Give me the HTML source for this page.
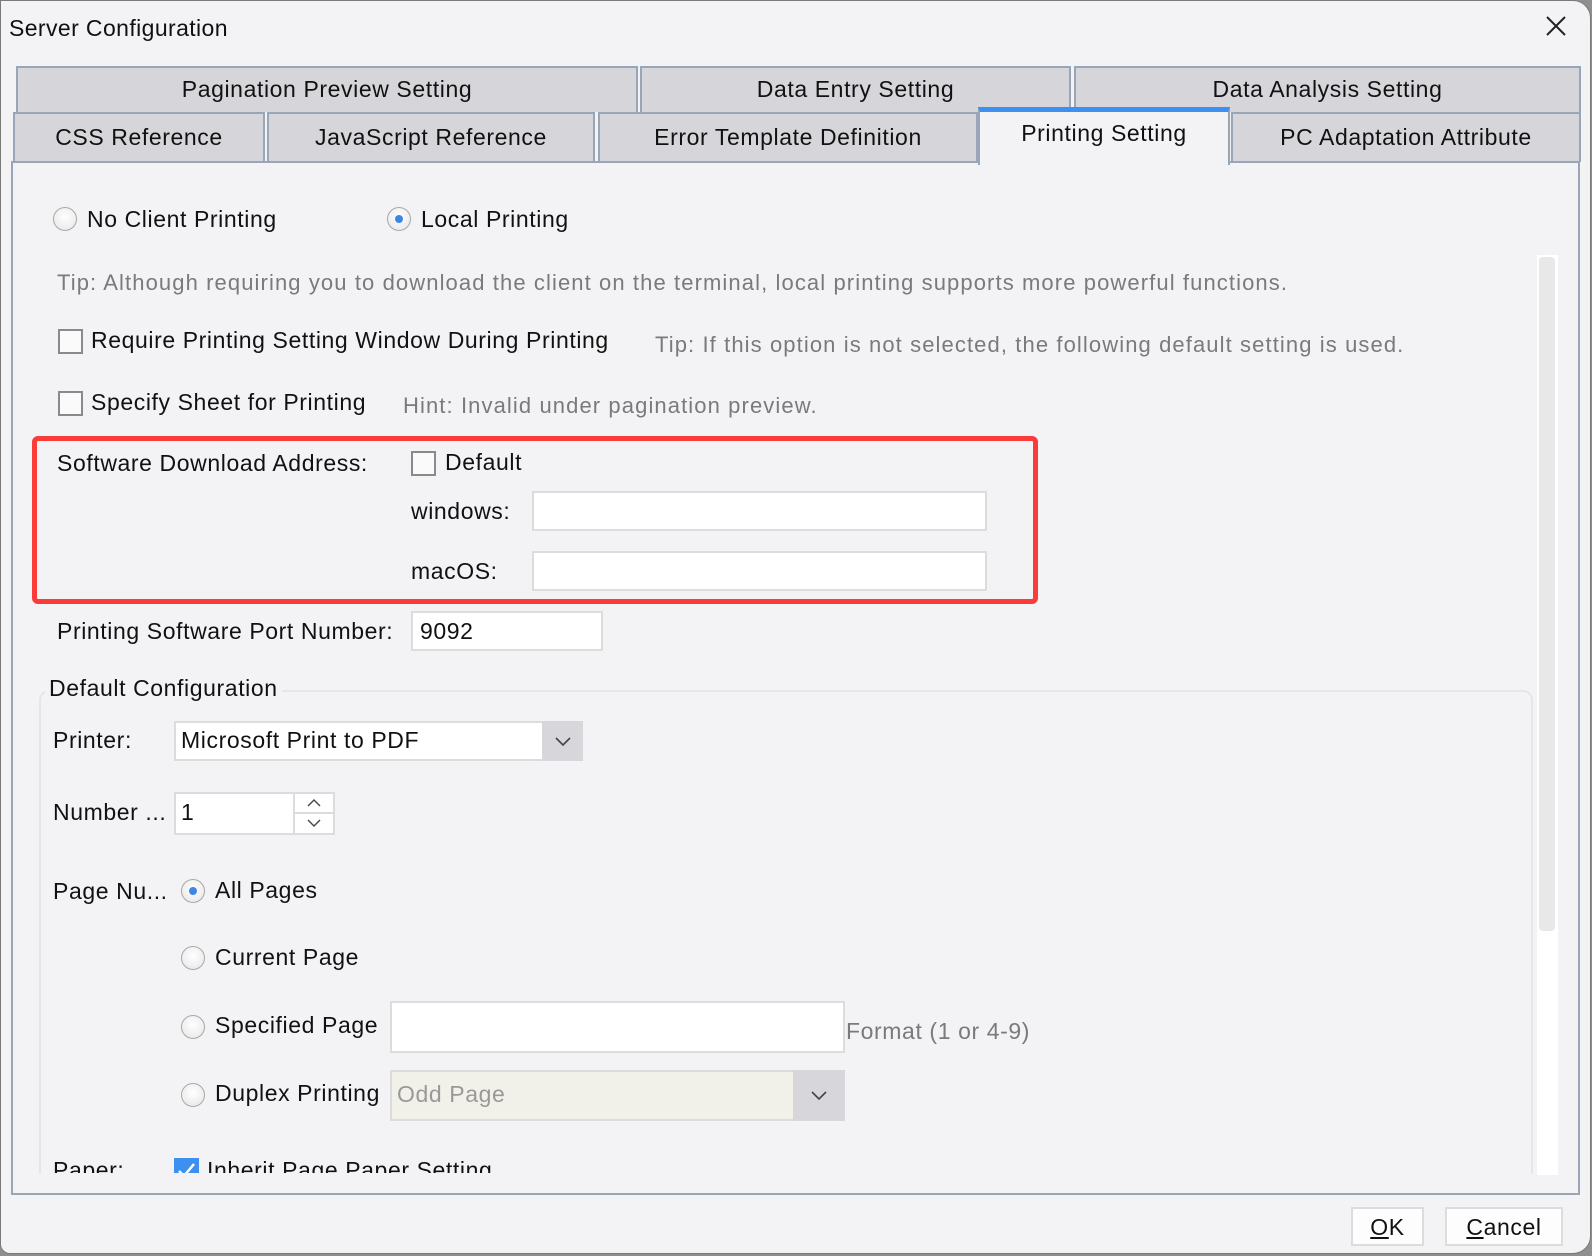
<!DOCTYPE html>
<html><head><meta charset="utf-8"><style>
*{box-sizing:border-box;margin:0;padding:0}
body{width:1592px;height:1256px;background:#8f8f8f;position:relative;overflow:hidden;font-family:"Liberation Sans",sans-serif;font-size:23px;color:#111;letter-spacing:0.6px}
.win{position:absolute;left:0;top:0;width:1591px;height:1254px;background:#f3f3f5;border:1px solid #7a7a7a;border-radius:0 18px 18px 10px;overflow:hidden}
.a{position:absolute;white-space:nowrap;line-height:1}
.tab{position:absolute;background:#d6d6da;border:2px solid #98a6b8;border-bottom:none;text-align:center;line-height:42px;font-size:23px}
.inp{position:absolute;background:#fff;border:2px solid #dcdcdc}
.cb{position:absolute;width:25px;height:25px;border:2px solid #8a8a8a;background:#fafafa}
.rd{position:absolute;width:24px;height:24px;border-radius:50%;border:1px solid #a8a8a8;background:radial-gradient(circle at 50% 40%,#fff,#e4e4e4)}
.rd.on::after{content:"";position:absolute;left:7px;top:7px;width:8px;height:8px;border-radius:50%;background:#3d86e8}
.g{color:#7a7a7a;letter-spacing:1.1px}
</style></head><body>
<div class="win">
 <div class="a" style="left:8px;top:16px;font-size:23px;letter-spacing:0.4px">Server Configuration</div>
 <svg class="a" style="left:1544px;top:14px" width="22" height="22"><path d="M2 2L20 20M20 2L2 20" stroke="#222" stroke-width="2"/></svg>

 <div class="tab" style="left:15px;top:65px;width:622px;height:46px">Pagination Preview Setting</div>
 <div class="tab" style="left:639px;top:65px;width:431px;height:46px">Data Entry Setting</div>
 <div class="tab" style="left:1073px;top:65px;width:507px;height:46px">Data Analysis Setting</div>
 <div class="tab" style="left:12px;top:111px;width:252px;height:50px;line-height:46px">CSS Reference</div>
 <div class="tab" style="left:266px;top:111px;width:328px;height:50px;line-height:46px">JavaScript Reference</div>
 <div class="tab" style="left:597px;top:111px;width:380px;height:50px;line-height:46px">Error Template Definition</div>
 <div class="tab" style="left:1230px;top:111px;width:350px;height:50px;line-height:46px">PC Adaptation Attribute</div>

 <div style="position:absolute;left:10px;top:160px;width:1569px;height:1034px;border:2px solid #98a6b8;background:#f3f3f5;border-bottom-color:#9aa6b4"></div>
 <div style="position:absolute;left:977px;top:106px;width:252px;height:58px;background:#f3f3f5;border-left:2px solid #98a6b8;border-right:2px solid #98a6b8;border-top:5px solid #3d8ff0;text-align:center;line-height:42px">Printing Setting</div>

 <div style="position:absolute;left:1536px;top:254px;width:21px;height:920px;background:#fff"></div>
 <div style="position:absolute;left:1538px;top:256px;width:16px;height:674px;background:#e8e8e8;border-radius:4px"></div>

 <div class="rd" style="left:52px;top:206px"></div><div class="a" style="left:86px;top:207px">No Client Printing</div>
 <div class="rd on" style="left:386px;top:206px"></div><div class="a" style="left:420px;top:207px">Local Printing</div>
 <div class="a g" style="left:56px;top:271px;font-size:22px">Tip: Although requiring you to download the client on the terminal, local printing supports more powerful functions.</div>
 <div class="cb" style="left:57px;top:328px"></div><div class="a" style="left:90px;top:328px">Require Printing Setting Window During Printing</div>
 <div class="a g" style="left:654px;top:333px;font-size:22px">Tip: If this option is not selected, the following default setting is used.</div>
 <div class="cb" style="left:57px;top:390px"></div><div class="a" style="left:90px;top:390px">Specify Sheet for Printing</div>
 <div class="a g" style="left:402px;top:394px;font-size:22px">Hint: Invalid under pagination preview.</div>

 <div style="position:absolute;left:31px;top:435px;width:1006px;height:168px;border:5px solid #fb3a3a;border-radius:6px"></div>
 <div class="a" style="left:56px;top:451px">Software Download Address:</div>
 <div class="cb" style="left:410px;top:450px"></div><div class="a" style="left:444px;top:450px">Default</div>
 <div class="a" style="left:410px;top:499px">windows:</div>
 <div class="inp" style="left:531px;top:490px;width:455px;height:40px"></div>
 <div class="a" style="left:410px;top:559px">macOS:</div>
 <div class="inp" style="left:531px;top:550px;width:455px;height:40px"></div>

 <div class="a" style="left:56px;top:619px">Printing Software Port Number:</div>
 <div class="inp" style="left:410px;top:610px;width:192px;height:40px"></div>
 <div class="a" style="left:419px;top:619px">9092</div>

 <div style="position:absolute;left:38px;top:689px;width:1494px;height:495px;border:2px solid #e6e6e8;border-radius:10px"></div>
 <div style="position:absolute;left:12px;top:1173px;width:1520px;height:19px;background:#f3f3f5"></div>
 <div class="a" style="left:44px;top:676px;background:#f3f3f5;padding:0 4px">Default Configuration</div>
 <div class="a" style="left:52px;top:728px">Printer:</div>
 <div class="inp" style="left:173px;top:720px;width:409px;height:40px"></div>
 <div style="position:absolute;left:541px;top:720px;width:41px;height:40px;background:#d7d7db"></div>
 <svg class="a" style="left:553px;top:735px" width="18" height="12"><path d="M2 2L9 9L16 2" stroke="#444" stroke-width="1.6" fill="none"/></svg>
 <div class="a" style="left:180px;top:728px">Microsoft Print to PDF</div>

 <div class="a" style="left:52px;top:800px">Number ...</div>
 <div class="inp" style="left:173px;top:791px;width:161px;height:43px"></div>
 <div style="position:absolute;left:292px;top:793px;width:2px;height:39px;background:#dcdcdc"></div>
 <div style="position:absolute;left:292px;top:811px;width:40px;height:2px;background:#dcdcdc"></div>
 <svg class="a" style="left:304px;top:796px" width="18" height="32"><path d="M3 9L9 3L15 9M3 23L9 29L15 23" stroke="#444" stroke-width="1.4" fill="none"/></svg>
 <div class="a" style="left:180px;top:800px">1</div>

 <div class="a" style="left:52px;top:879px">Page Nu...</div>
 <div class="rd on" style="left:180px;top:878px"></div><div class="a" style="left:214px;top:878px">All Pages</div>
 <div class="rd" style="left:180px;top:945px"></div><div class="a" style="left:214px;top:945px">Current Page</div>
 <div class="rd" style="left:180px;top:1014px"></div><div class="a" style="left:214px;top:1013px">Specified Page</div>
 <div class="inp" style="left:389px;top:1000px;width:455px;height:52px"></div>
 <div class="a g" style="left:845px;top:1019px;letter-spacing:0.6px">Format (1 or 4-9)</div>
 <div class="rd" style="left:180px;top:1082px"></div><div class="a" style="left:214px;top:1081px">Duplex Printing</div>
 <div class="inp" style="left:389px;top:1069px;width:455px;height:51px;background:#f1f1ea"></div>
 <div style="position:absolute;left:792px;top:1069px;width:52px;height:51px;background:#d7d7db"></div>
 <svg class="a" style="left:809px;top:1089px" width="18" height="12"><path d="M2 2L9 9L16 2" stroke="#444" stroke-width="1.6" fill="none"/></svg>
 <div class="a g" style="left:396px;top:1082px;color:#999;letter-spacing:0.6px">Odd Page</div>

 <div style="position:absolute;left:40px;top:1150px;width:1490px;height:22px;overflow:hidden">
  <div class="a" style="left:12px;top:8px">Paper:</div>
  <div style="position:absolute;left:133px;top:7px;width:25px;height:25px;background:#3d8ff0"></div>
  <svg class="a" style="left:133px;top:7px" width="25" height="25"><path d="M5 13L10 18L20 6" stroke="#fff" stroke-width="2.5" fill="none"/></svg>
  <div class="a" style="left:166px;top:8px">Inherit Page Paper Setting</div>
 </div>

 <div style="position:absolute;left:1350px;top:1206px;width:73px;height:39px;background:#fdfdfd;border:2px solid #dcdcdc;text-align:center;line-height:36px"><u>O</u>K</div>
 <div style="position:absolute;left:1444px;top:1206px;width:118px;height:39px;background:#fdfdfd;border:2px solid #dcdcdc;text-align:center;line-height:36px"><u>C</u>ancel</div>
</div>
</body></html>
